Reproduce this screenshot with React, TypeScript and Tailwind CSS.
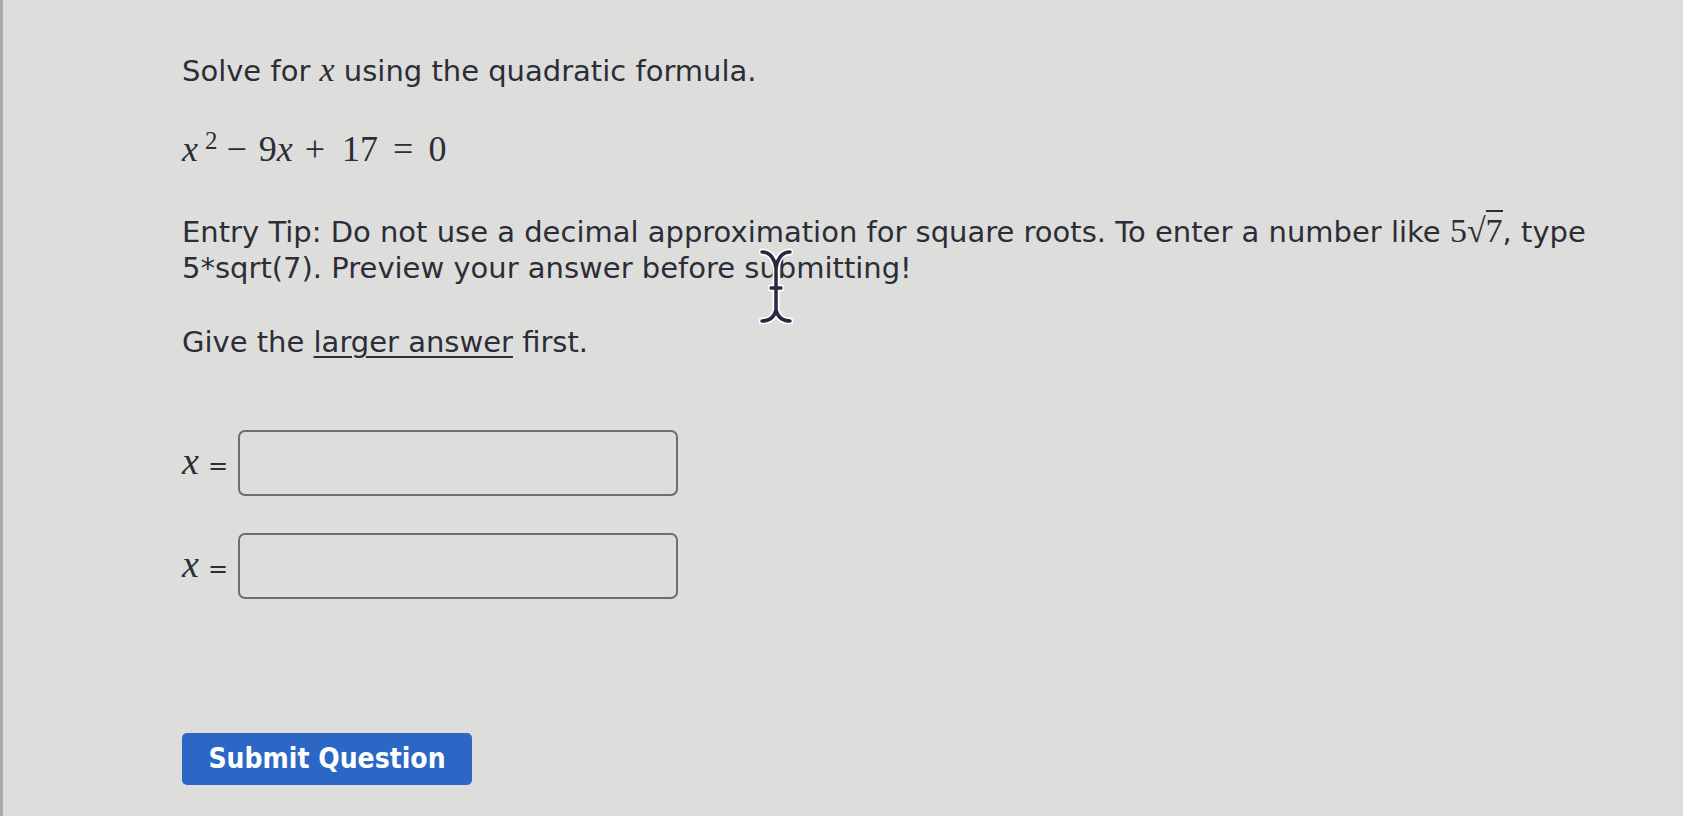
import { useState } from "react";

const body = "font-['DejaVu_Sans',sans-serif]";
const math = "font-['Liberation_Serif','DejaVu_Serif',serif]";

function AnswerRow({ value, onChange }: { value: string; onChange: (v: string) => void }) {
  return (
    <div className="flex items-center">
      <span className="flex w-[56px] items-baseline text-[24px]">
        <i className={`${math} text-[38px]`}>x</i>
        <span className="ml-[9px]">=</span>
      </span>
      <input
        value={value}
        onChange={(e) => onChange(e.target.value)}
        className="h-[66px] w-[440px] rounded-[7px] border-2 border-[#6e6e70] bg-transparent px-3 text-[26px] outline-none"
      />
    </div>
  );
}

export default function App() {
  const [first, setFirst] = useState("");
  const [second, setSecond] = useState("");

  return (
    <div
      className={`relative min-h-[816px] w-full overflow-hidden bg-[#dddedc] pl-[182px] pt-[52px] text-[29px] leading-[36px] text-[#2c2d36] ${body}`}
    >
      <div className="absolute inset-y-0 left-0 w-[3px] bg-[#a9aaa8]" />

      <p>
        Solve for <i className={`${math} text-[34px]`}>x</i> using the quadratic formula.
      </p>

      <p className={`${math} mt-[42px] text-[36px]`}>
        <i>x</i>
        <sup className="ml-[7px] text-[25px]">2</sup>
        <span className="ml-[9px] mr-[12px]">−</span>9<i>x</i>
        <span className="ml-[12px] mr-[17px]">+</span>17
        <span className="mx-[15px]">=</span>0
      </p>

      <p className="mt-[46px]">
        Entry Tip: Do not use a decimal approximation for square roots. To enter a number like{" "}
        <span className={`${math} text-[34px]`}>
          5√<span className="border-t-2 border-[#2c2d36]">7</span>
        </span>
        , type
        <br />
        5*sqrt(7). Preview your answer before submitting!
      </p>

      <p className="mt-[38px]">
        Give the <span className="underline decoration-2 underline-offset-4">larger answer</span> first.
      </p>

      <div className="mt-[70px] flex flex-col gap-[37px]">
        <AnswerRow value={first} onChange={setFirst} />
        <AnswerRow value={second} onChange={setSecond} />
      </div>

      <button
        className={`mt-[134px] h-[52px] w-[290px] rounded-[5px] bg-[#2c67c6] text-[28px] font-bold text-white font-['DejaVu_Sans_Condensed','DejaVu_Sans',sans-serif]`}
      >
        Submit Question
      </button>

      {/* mouse I-beam cursor */}
      <svg className="absolute left-[759px] top-[248px]" width="34" height="76" viewBox="0 0 34 76">
        <path
          d="M3 4 C10 4 15 8 17 20 C19 8 24 4 31 4 M17 20 V62 M12 40 H22 M3 73 C10 73 15 70 17 62 C19 70 24 73 31 73"
          fill="none"
          stroke="#fff"
          strokeWidth="7"
          strokeLinecap="round"
        />
        <path
          d="M3 4 C10 4 15 8 17 20 C19 8 24 4 31 4 M17 20 V62 M12 40 H22 M3 73 C10 73 15 70 17 62 C19 70 24 73 31 73"
          fill="none"
          stroke="#2a2540"
          strokeWidth="3.5"
          strokeLinecap="round"
        />
      </svg>
    </div>
  );
}
